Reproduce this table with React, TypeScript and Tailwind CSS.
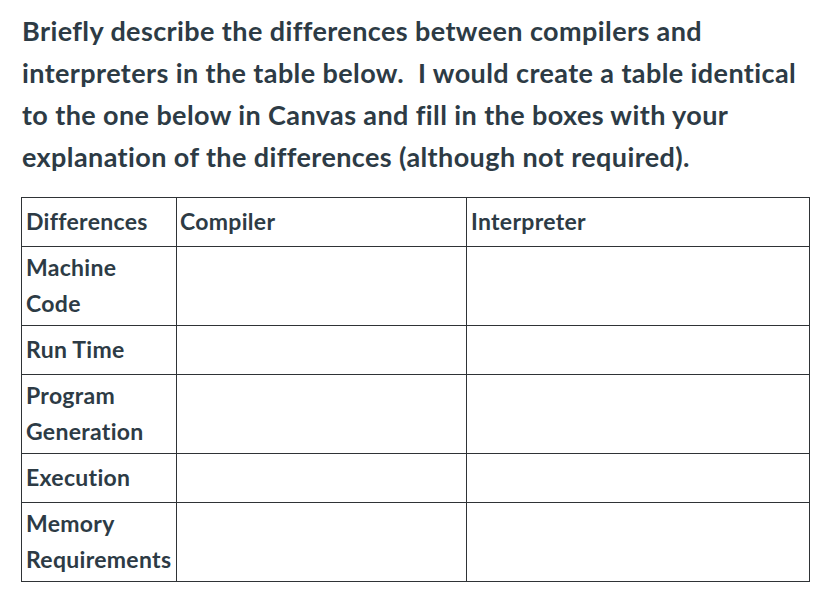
import React from "react";

const rows: { label: string[]; h: string }[] = [
  { label: ["Machine", "Code"], h: "h-[79px]" },
  { label: ["Run Time"], h: "h-[49px]" },
  { label: ["Program", "Generation"], h: "h-[79px]" },
  { label: ["Execution"], h: "h-[49px]" },
  { label: ["Memory", "Requirements"], h: "h-[79px]" },
];

export default function App() {
  return (
    <div
      className="w-[838px] h-[601px] bg-white text-[#2d3b45] overflow-hidden"
      style={{ fontFamily: "Lato, 'Noto Sans', sans-serif" }}
    >
      <p className="pl-[22px] pr-[10px] pt-[10px] text-[27px] leading-[42px] tracking-[0.4px] font-bold">
        Briefly describe the differences between compilers and interpreters in the table below.&nbsp; I would create a table identical to the one below in Canvas and fill in the boxes with your explanation of the differences (although not required).
      </p>
      <table className="ml-[21px] mt-[19px] w-[788px] table-fixed border-collapse text-[23px] leading-[36px] tracking-[0.3px] font-bold">
        <colgroup>
          <col className="w-[155px]" />
          <col className="w-[290px]" />
          <col className="w-[343px]" />
        </colgroup>
        <tbody>
          <tr className="h-[49px]">
            <td className="border border-[#2f3336] px-[4px] pt-[2px] pb-[4px] align-middle">Differences</td>
            <td className="border border-[#2f3336] pl-[3px] pr-[4px] pt-[2px] pb-[4px] align-middle">Compiler</td>
            <td className="border border-[#2f3336] px-[4px] pt-[2px] pb-[4px] align-middle">Interpreter</td>
          </tr>
          {rows.map((r, i) => (
            <tr key={i} className={r.h}>
              <td className="border border-[#2f3336] px-[4px] pt-[2px] pb-[4px] align-middle whitespace-nowrap">
                {r.label.map((l, j) => (
                  <div key={j}>{l}</div>
                ))}
              </td>
              <td className="border border-[#2f3336]"></td>
              <td className="border border-[#2f3336]"></td>
            </tr>
          ))}
        </tbody>
      </table>
    </div>
  );
}
